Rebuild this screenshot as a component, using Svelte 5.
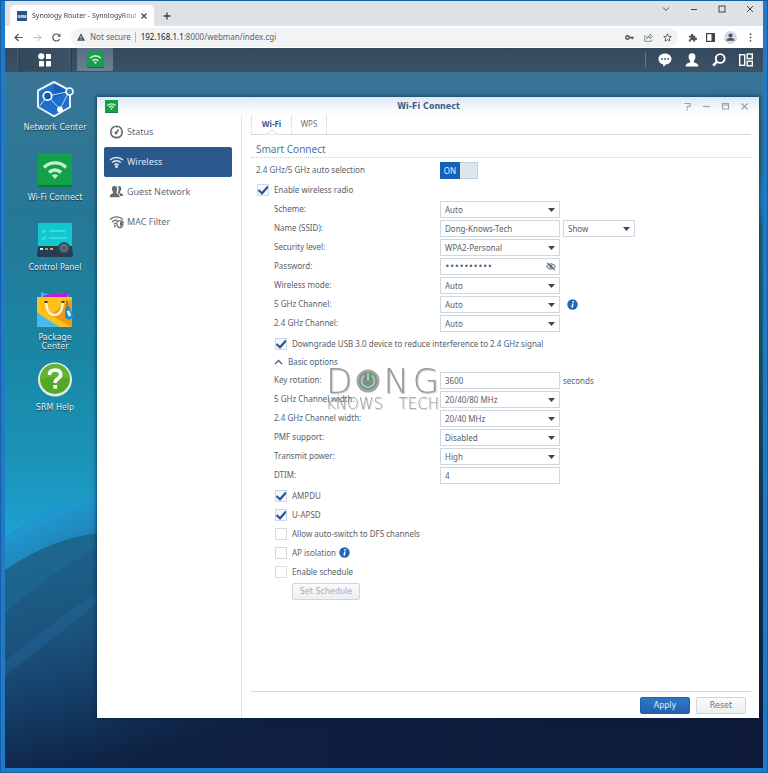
<script>
  const deskIcons = [
    { id: 'network', label: 'Network Center' },
    { id: 'wifi', label: 'Wi-Fi Connect' },
    { id: 'panel', label: 'Control Panel' },
    { id: 'package', label: 'Package\nCenter' },
    { id: 'help', label: 'SRM Help' }
  ];
  const navItems = [
    { id: 'status', label: 'Status' },
    { id: 'wireless', label: 'Wireless' },
    { id: 'guest', label: 'Guest Network' },
    { id: 'mac', label: 'MAC Filter' }
  ];
  const radioFields = [
    { id: 'scheme', label: 'Scheme:', type: 'select', value: 'Auto' },
    { id: 'ssid', label: 'Name (SSID):', type: 'text', value: 'Dong-Knows-Tech', extra: 'Show' },
    { id: 'security', label: 'Security level:', type: 'select', value: 'WPA2-Personal' },
    { id: 'password', label: 'Password:', type: 'password', value: 'password10' },
    { id: 'mode', label: 'Wireless mode:', type: 'select', value: 'Auto' },
    { id: 'ch5', label: '5 GHz Channel:', type: 'select', value: 'Auto', info: true },
    { id: 'ch24', label: '2.4 GHz Channel:', type: 'select', value: 'Auto' }
  ];
  const basicFields = [
    { id: 'key', label: 'Key rotation:', type: 'text', value: '3600', unit: 'seconds' },
    { id: 'w5', label: '5 GHz Channel width:', type: 'select', value: '20/40/80 MHz' },
    { id: 'w24', label: '2.4 GHz Channel width:', type: 'select', value: '20/40 MHz' },
    { id: 'pmf', label: 'PMF support:', type: 'select', value: 'Disabled' },
    { id: 'power', label: 'Transmit power:', type: 'select', value: 'High' },
    { id: 'dtim', label: 'DTIM:', type: 'text', value: '4' }
  ];
  const checks = [
    { label: 'AMPDU', on: true },
    { label: 'U-APSD', on: true },
    { label: 'Allow auto-switch to DFS channels', on: false },
    { label: 'AP isolation', on: false, info: true },
    { label: 'Enable schedule', on: false }
  ];
  let active = $state('wireless');
</script>

{#snippet wifiTile(size)}
  <svg width={size} height={size} viewBox="0 0 34 34" aria-hidden="true">
    <rect width="34" height="34" rx="1" fill="#0a7a38" />
    <rect width="34" height="32" rx="1" fill="#12a048" />
    <g fill="none" stroke="#c9eed2" stroke-width="3.4">
      <path d="M6 14.5a15.5 15.5 0 0 1 22 0" />
      <path d="M11 19.5a8.5 8.5 0 0 1 12 0" />
    </g>
    <path d="M17 26l-3.2-3.4a4.6 4.6 0 0 1 6.4 0z" fill="#c9eed2" />
  </svg>
{/snippet}

{#snippet info()}
  <svg class="info" width="11" height="11" viewBox="0 0 11 11" role="img" aria-label="Info">
    <circle cx="5.5" cy="5.5" r="5.2" fill="#1f68b8" />
    <circle cx="6.1" cy="2.8" r="0.9" fill="#fff" />
    <path d="M5.900 4.500L5.100 8.500" stroke="#fff" stroke-width="1.500" fill="none" />
  </svg>
{/snippet}

{#snippet field(f)}
  <div class="row">
    <label class="name" for={f.id}>{f.label}</label>
    {#if f.type === 'select'}
      <select id={f.id}><option>{f.value}</option></select>
    {:else if f.type === 'password'}
      <span class="secret">
        <input id={f.id} type="password" value={f.value} />
        <button class="eye" aria-label="Show password">
          <svg width="10" height="9" viewBox="0 0 11 9">
            <path d="M.6 4.5Q5.5-1.3 10.400 4.500Q5.500 10.300.6 4.500z" fill="none" stroke="#6a727a" stroke-width="1.200" />
            <circle cx="5.500" cy="4.500" r="1.700" fill="#6a727a" />
            <path d="M1.300.5l8.600 8" stroke="#555d66" stroke-width="1.200" />
          </svg>
        </button>
      </span>
    {:else}
      <input id={f.id} type="text" value={f.value} />
    {/if}
    {#if f.extra}<select class="short" aria-label="SSID visibility"><option>{f.extra}</option></select>{/if}
    {#if f.unit}<span class="unit">{f.unit}</span>{/if}
    {#if f.info}<span class="hint">{@render info()}</span>{/if}
  </div>
{/snippet}

<div class="browser">
  <header class="tabstrip">
    <div class="tab">
      <svg width="10" height="10" viewBox="0 0 10 10" aria-hidden="true"><rect width="10" height="10" fill="#2a5289" /><text x="5" y="6.500" text-anchor="middle" font-size="4" font-weight="700" fill="#fff" font-family="Liberation Sans, sans-serif">SRM</text></svg>
      <span class="tabtitle">Synology Router - SynologyRout</span>
      <button aria-label="Close tab"><svg width="6" height="6" viewBox="0 0 6 6"><path d="M.5.5l5 5M5.500.5l-5 5" stroke="#444" stroke-width="1.200" /></svg></button>
    </div>
    <button class="newtab" aria-label="New tab"><svg width="8" height="8" viewBox="0 0 8 8"><path d="M4 .5v7M.5 4h7" stroke="#3c4043" stroke-width="1.300" /></svg></button>
    <div class="winctl">
      <button aria-label="Search tabs"><svg width="8" height="8" viewBox="0 0 8 8"><path d="M1 2.500l3 3 3-3" stroke="#555" fill="none" /></svg></button>
      <button aria-label="Minimize"><svg width="8" height="8" viewBox="0 0 8 8"><path d="M1 4.500h6" stroke="#444" /></svg></button>
      <button aria-label="Maximize"><svg width="8" height="8" viewBox="0 0 8 8"><rect x="1" y="1" width="6" height="6" stroke="#444" fill="none" /></svg></button>
      <button aria-label="Close"><svg width="8" height="8" viewBox="0 0 8 8"><path d="M1 1l6 6M7 1l-6 6" stroke="#444" /></svg></button>
    </div>
  </header>

  <nav class="toolbar" aria-label="Browser">
    <button aria-label="Back"><svg width="9" height="9" viewBox="0 0 9 9"><path d="M8.500 4.500H1M4.500 1L1 4.500 4.500 8" stroke="#505458" stroke-width="1.200" fill="none" /></svg></button>
    <button aria-label="Forward"><svg width="9" height="9" viewBox="0 0 9 9"><path d="M.5 4.500H8M4.500 1L8 4.500 4.500 8" stroke="#b4b7ba" fill="none" /></svg></button>
    <button aria-label="Reload"><svg width="9" height="9" viewBox="0 0 9 9"><path d="M7.500 6A3.500 3.500 0 1 1 7 2.200" stroke="#505458" stroke-width="1.200" fill="none" /><path d="M8.500.5v3.300H5.200z" fill="#505458" /></svg></button>
    <div class="omnibox">
      <svg width="8" height="8" viewBox="0 0 8 8" aria-hidden="true"><path d="M4 .3L8 7.700H0z" fill="#505458" /><path d="M4 3v2.200M4 5.800v1" stroke="#fff" stroke-width=".8" /></svg>
      <span class="insecure">Not secure</span>
      <span class="url"><b>192.168.1.1</b>:8000/webman/index.cgi</span>
      <span class="boxicons">
        <svg width="9" height="9" viewBox="0 0 9 9" aria-hidden="true"><circle cx="2.500" cy="4.500" r="1.700" stroke="#505458" stroke-width="1.400" fill="none" /><path d="M4.200 4.500h4.500M7.300 4.500v1.800" stroke="#505458" stroke-width="1.500" /></svg>
        <svg width="9" height="9" viewBox="0 0 9 9" aria-hidden="true"><path d="M2.500 3H.7v5.300h6.600V6.500M2.500 6q.5-3 3.500-3V1l2.500 2.500L6 5.600V4Q4 4 2.500 6z" stroke="#74787c" stroke-width=".8" fill="none" /></svg>
        <svg width="9" height="9" viewBox="0 0 9 9" aria-hidden="true"><path d="M4.500.8l1.100 2.500 2.700.3-2 1.800.6 2.700-2.400-1.400-2.400 1.400.6-2.700-2-1.800 2.700-.3z" stroke="#505458" stroke-width=".9" fill="none" /></svg>
      </span>
    </div>
    <div class="ext">
      <svg width="9" height="9" viewBox="0 0 10 10" aria-hidden="true"><path d="M1 3h2.300a1.500 1.500 0 1 1 2.700 0H8v2.200a1.400 1.400 0 1 1 0 2.500V9.500H5.700a1.300 1.300 0 1 0-2.400 0H1V7a1.200 1.200 0 1 0 0-2.200z" fill="#505458" /></svg>
      <svg width="9" height="9" viewBox="0 0 9 9" aria-hidden="true"><rect x=".6" y=".6" width="7.800" height="7.800" fill="none" stroke="#444" stroke-width="1.200" /><path d="M5.500 1h3v7h-3z" fill="#444" /></svg>
      <svg width="13" height="13" viewBox="0 0 13 13" aria-hidden="true"><circle cx="6.500" cy="6.500" r="6.500" fill="#d6dae4" /><circle cx="6.500" cy="4.600" r="2" fill="#474f63" /><path d="M2.500 9.800q0-2.700 4-2.700t4 2.700z" fill="#474f63" /></svg>
      <svg width="9" height="9" viewBox="0 0 9 9" aria-hidden="true"><g fill="#505458"><circle cx="4.500" cy="1.200" r=".9" /><circle cx="4.500" cy="4.500" r=".9" /><circle cx="4.500" cy="7.800" r=".9" /></g></svg>
    </div>
  </nav>

  <div class="taskbar">
    <button class="mainmenu" aria-label="Main menu">
      <svg width="14" height="14" viewBox="0 0 14 14"><g fill="#fff"><circle cx="3.300" cy="3.300" r="3.100" /><rect x="8" y="1" width="5" height="5" rx=".5" /><rect x="1" y="8" width="5" height="5.500" rx=".5" /><rect x="8" y="8" width="5" height="5.500" rx=".5" /></g></svg>
    </button>
    <button class="task" aria-label="Wi-Fi Connect">{@render wifiTile(17)}</button>
    <div class="tray">
      <button aria-label="Notifications"><svg width="14" height="14" viewBox="0 0 14 14"><path d="M7 .5c3.700 0 6.500 2.300 6.500 5.400S10.700 11.200 8 11.400L5.500 13.800 5 11.200C2.400 10.700.5 8.600.5 5.900.5 2.800 3.300.5 7 .5z" fill="#fff" /><g fill="#3a5065"><circle cx="4" cy="6" r=".9" /><circle cx="7" cy="6" r=".9" /><circle cx="10" cy="6" r=".9" /></g></svg></button>
      <button aria-label="User"><svg width="14" height="14" viewBox="0 0 14 14"><path d="M7 .3c2.500 0 3.600 1.600 3.400 4C10.200 6.200 9.500 7 8.800 8v1.300c1.700.8 4.400 1 4.700 4.200H.5C.8 10.300 3.500 10.100 5.200 9.300V8C4.500 7 3.800 6.200 3.600 4.300 3.400 1.900 4.500.3 7 .3z" fill="#fff" /></svg></button>
      <button aria-label="Search"><svg width="14" height="14" viewBox="0 0 14 14"><circle cx="8.200" cy="5.500" r="4.400" fill="none" stroke="#fff" stroke-width="1.900" /><path d="M5 8.700L1.200 12.600" stroke="#fff" stroke-width="2.600" /></svg></button>
      <button aria-label="Widgets"><svg width="14" height="14" viewBox="0 0 14 14"><g fill="none" stroke="#fff" stroke-width="1.400"><rect x=".7" y="1.700" width="5" height="10.600" /><rect x="8.200" y="1" width="5.100" height="4.600" /><rect x="8.200" y="8.200" width="5.100" height="4.600" /></g></svg></button>
    </div>
  </div>

  <main class="desktop">
    <svg class="wallpaper" viewBox="0 0 758 697" preserveAspectRatio="none" aria-hidden="true">
      <defs>
        <linearGradient id="sky" gradientUnits="userSpaceOnUse" x1="0" y1="0" x2="0" y2="470">
          <stop offset="0" stop-color="#3b7596" /><stop offset=".3" stop-color="#257895" /><stop offset=".6" stop-color="#1a86a5" /><stop offset=".85" stop-color="#1b95ba" /><stop offset="1" stop-color="#1ba3d6" />
        </linearGradient>
        <linearGradient id="crest" gradientUnits="userSpaceOnUse" x1="25" y1="440" x2="60" y2="512">
          <stop offset="0" stop-color="#1f9fd6" /><stop offset=".5" stop-color="#2088bd" /><stop offset="1" stop-color="#1c6b96" />
        </linearGradient>
        <linearGradient id="sea" gradientUnits="userSpaceOnUse" x1="20" y1="480" x2="70" y2="697">
          <stop offset="0" stop-color="#1d628c" /><stop offset=".4" stop-color="#1b537c" /><stop offset=".65" stop-color="#15406a" /><stop offset="1" stop-color="#0e2345" />
        </linearGradient>
        <linearGradient id="shade" x1="0" y1="0" x2="1" y2="0">
          <stop offset=".12" stop-color="#10183a" stop-opacity="0" /><stop offset=".4" stop-color="#101c3d" stop-opacity=".6" /><stop offset="1" stop-color="#0e1732" stop-opacity=".7" />
        </linearGradient>
        <linearGradient id="east" x1="0" y1="0" x2="0" y2="1">
          <stop offset="0" stop-color="#3b7596" /><stop offset=".14" stop-color="#286d92" /><stop offset=".2" stop-color="#1b84c2" /><stop offset=".24" stop-color="#1d6a90" /><stop offset=".4" stop-color="#176374" /><stop offset=".6" stop-color="#15465b" /><stop offset=".8" stop-color="#12304d" /><stop offset="1" stop-color="#0f1e3a" />
        </linearGradient>
      </defs>
      <rect width="758" height="697" fill="url(#sky)" />
      <path d="M0 466Q45 436 92 420Q300 350 758 300V697H0z" fill="url(#sea)" />
      <path d="M0 466Q45 436 92 420V462Q45 468 0 499z" fill="url(#crest)" />
      <path d="M0 499Q45 468 92 462V476Q40 505 0 542z" fill="#1d6a93" opacity=".6" />
      <path d="M0 590Q50 550 92 520V532Q50 566 0 604z" fill="#2468a0" opacity=".4" />
      <path d="M0 621H758V697H0z" fill="url(#shade)" />
      <rect x="700" width="58" height="647" fill="url(#east)" />
    </svg>

    <div class="icons">
      {#each deskIcons as icon}
        <button class="deskicon">
          {#if icon.id === 'wifi'}
            <span class="tile">{@render wifiTile(34)}</span>
          {:else}
            <svg width="38" height="36" viewBox="0 0 38 36" aria-hidden="true">
              {#if icon.id === 'network'}
                <path d="M18 1L34 9.500V26L18 35.300 2 26V9.500z" fill="#1d6fc9" stroke="#e6eff6" stroke-width="2" stroke-linejoin="round" />
                <path d="M18 2.500L32.500 10 18 17z" fill="#1456ab" opacity=".6" />
                <path d="M11.500 15L33 10.500M11.500 15L24 28M11.500 15L3.500 25M33 10.500L24 28" stroke="#b7dcf5" stroke-width="1" />
                <circle cx="11.500" cy="15" r="4.200" fill="#1459ac" stroke="#fff" stroke-width="1.700" />
                <circle cx="33.500" cy="10.500" r="3.500" fill="#2a86cc" stroke="#fff" stroke-width="1.700" />
                <circle cx="24" cy="28.500" r="2.900" fill="#fff" />
              {:else if icon.id === 'panel'}
                <rect x="2" y="2" width="34" height="24" fill="#12c8cf" />
                <g stroke="#50dede" stroke-width="1.500" fill="none"><path d="M6 10l1.500 1.500L10 8.500M13 10h16M6 17l1.500 1.500 2.500-3M13 17h18" /></g>
                <path d="M2 25h34l1 9q0 2-2 2H3q-2 0-2-2z" fill="#263c52" />
                <path d="M4 28h3" stroke="#e6eef2" stroke-width="2" /><path d="M9 28h3" stroke="#61c36d" stroke-width="2" /><path d="M14 28h3" stroke="#e6a94c" stroke-width="2" />
                <circle cx="28" cy="27" r="6" fill="#31475c" /><circle cx="28" cy="27" r="4" fill="#61717f" /><circle cx="28" cy="27" r="2" fill="#48596a" />
              {:else if icon.id === 'package'}
                <path d="M5 1l10 3 9-2 9 1v6H5z" fill="#35b9e8" /><path d="M9 4l24-2.500-2 6H5z" fill="#c31bd2" />
                <path d="M1 6h35v30H1z" fill="#fbc21c" /><path d="M36 36V8L14 24z" fill="#f19a17" /><path d="M1 21q9 7 23 15H1z" fill="#4db8ea" />
                <path d="M10 11q1 13 8.500 13T27 11" fill="none" stroke="#fff0ce" stroke-width="2.400" /><path d="M8.500 11h3M25.500 11h3" stroke="#4a3a22" stroke-width="2" />
                <path d="M31 9v8" stroke="#7d5a20" stroke-width="1.200" /><path d="M29 17l4-2 5 11-5 3-4-2z" fill="#1695d4" /><path d="M32 20l2 5" stroke="#fff" stroke-width="2.500" />
              {:else}
                <circle cx="19" cy="18.500" r="17" fill="#e7ece5" /><circle cx="19" cy="18" r="15" fill="#52a928" /><path d="M4 18a15 15 0 0 1 30 0q-15-4-30 0z" fill="#62b336" />
                <path d="M13.500 14q0-5 5.500-5 5.700 0 5.700 4.600 0 2.500-3 4.300-2.500 1.400-2.500 4" fill="none" stroke="#fff" stroke-width="3.600" /><rect x="17.300" y="24" width="3.800" height="3.600" fill="#fff" />
              {/if}
            </svg>
          {/if}
          <span class="caption">{icon.label}</span>
        </button>
      {/each}
    </div>

    <section class="window">
      <header class="titlebar">
        {@render wifiTile(13)}
        <h1>Wi-Fi Connect</h1>
        <div class="controls">
          <button aria-label="Help"><svg width="9" height="9" viewBox="0 0 9 9"><path d="M1.500 1.500h5.500v3H4.300v1.700M4.300 7v1.400" /></svg></button>
          <button aria-label="Minimize"><svg width="9" height="9" viewBox="0 0 9 9"><path d="M1 4.500h7" /></svg></button>
          <button aria-label="Maximize"><svg width="9" height="9" viewBox="0 0 9 9"><path d="M1.500 1.500h6v5.500h-6zM1.500 3h6" /></svg></button>
          <button aria-label="Close"><svg width="9" height="9" viewBox="0 0 9 9"><path d="M1.500 1.500l6 6M7.500 1.500l-6 6" /></svg></button>
        </div>
      </header>

      <div class="body">
        <nav class="sidebar" aria-label="Sections">
          {#each navItems as item}
            <button class:active={active === item.id} onclick={() => (active = item.id)}>
              <svg width="15" height="14" viewBox="0 0 15 14" aria-hidden="true" fill="none" stroke="currentColor" stroke-width="1.500">
                {#if item.id === 'status'}
                  <circle cx="7.500" cy="7" r="5.800" /><path d="M7 8.500l2.500-4" /><path d="M7.500 1v2M7.500 11v2M2 7h1.500M11.500 7h2" stroke-width=".7" /><circle cx="7" cy="8" r=".7" />
                {:else if item.id === 'wireless'}
                  <path d="M1 5a9.500 9.500 0 0 1 13 0M3.200 7.500a6.500 6.500 0 0 1 8.600 0M5.300 9.800a3.500 3.500 0 0 1 4.400 0" /><circle cx="7.500" cy="11.600" r="1.500" fill="currentColor" stroke="none" />
                {:else if item.id === 'guest'}
                  <g fill="currentColor" stroke="none"><path d="M5.500 1c2.300 0 3 1.500 2.700 3.500L7.500 7v1.300c1.500.7 3 1 3.200 3.900H.8C1 9.300 2.300 9 4 8.300V7L2.900 4.500C2.600 2.500 3.200 1 5.500 1z" /><path d="M9 1c2.800-.5 3.600 1 3.200 3.400L11 7v1c2 .6 3 1.300 3.200 3h-3Q10.800 8.500 8.700 7.700l1-3Q9.900 2.400 9 1z" /></g>
                {:else}
                  <path d="M1 4.500a9.500 9.500 0 0 1 13 0M3 7a6.500 6.500 0 0 1 5.500-1.700M5 9.300a3 3 0 0 1 2-1" stroke-width="1.300" /><path d="M8 6.500l3-1 3 1v2.800q0 2.400-3 3.700-3-1.300-3-3.700z" stroke-width="1.100" /><path d="M11 6.500l2.500.6v2.300L11 12z" fill="currentColor" stroke="none" /><circle cx="6" cy="11.300" r="1" fill="currentColor" stroke="none" />
                {/if}
              </svg>
              {item.label}
            </button>
          {/each}
        </nav>

        <div class="content">
          <div class="tabs" role="tablist">
            <button role="tab" aria-selected="true" class="current">Wi-Fi<svg width="10" height="6" viewBox="0 0 10 6" aria-hidden="true"><path d="M0 5.500L5 .7l5 4.800z" fill="#fff" /><path d="M0 4.500h1L5 .7l4 3.800h1" fill="none" stroke="#cfd5da" /></svg></button>
            <button role="tab" aria-selected="false">WPS</button>
          </div>

          <form onsubmit={(e) => e.preventDefault()}>
            <h2>Smart Connect</h2>
            <div class="row first">
              <span class="name" id="smart">2.4 GHz/5 GHz auto selection</span>
              <button type="button" class="switch" role="switch" aria-checked="true" aria-labelledby="smart"><span>ON</span></button>
            </div>
            <label class="check"><input type="checkbox" checked />Enable wireless radio</label>

            <div class="radio">
              <div class="group">
                {#each radioFields as f}{@render field(f)}{/each}
              </div>
              <label class="check"><input type="checkbox" checked />Downgrade USB 3.0 device to reduce interference to 2.4 GHz signal</label>
              <button type="button" class="fold">
                <svg width="9" height="6" viewBox="0 0 9 6" aria-hidden="true"><path d="M1 5l3.500-3.500L8 5" fill="none" stroke="#3a6491" stroke-width="1.300" /></svg>Basic options
              </button>
              <div class="group basic">
                {#each basicFields as f}{@render field(f)}{/each}
                <div class="watermark">
                  <div class="dong">
                    <span>D</span>
                    <svg width="24" height="24" viewBox="0 0 24 24" aria-label="O" role="img"><circle cx="12" cy="12" r="10.300" fill="#666e6c" stroke="#8b9290" stroke-width="2.400" /><path d="M8.300 6.500a6.500 6.500 0 1 0 7.400 0M12 4v7.500" fill="none" stroke="#6fdc8c" stroke-width="1.800" /></svg>
                    <span>N</span><span>G</span>
                  </div>
                  <div class="knows"><span>KNOWS</span><span>TECH</span></div>
                </div>
              </div>
              {#each checks as c}
                <label class="check"><input type="checkbox" checked={c.on} />{c.label}{#if c.info}{@render info()}{/if}</label>
              {/each}
              <button type="button" class="btn schedule" disabled>Set Schedule</button>
            </div>
          </form>

          <footer>
            <button class="btn primary">Apply</button>
            <button class="btn">Reset</button>
          </footer>
        </div>
      </div>
    </section>
  </main>
</div>

<style>
  :global(body) {
    margin: 0;
  }
  * {
    box-sizing: border-box;
  }
  button,
  input,
  select {
    font: inherit;
    color: inherit;
    margin: 0;
    padding: 0;
    border: 0;
    background: none;
  }
  svg {
    display: block;
    flex: none;
  }
  .browser {
    display: flex;
    flex-direction: column;
    min-height: 100vh;
    border: 5px solid #1f7bc9;
    border-top: 1px solid #7fa5cf;
    outline: 1px solid #165fa3;
    outline-offset: -1px;
    font: 8px/10px 'DejaVu Sans', Verdana, sans-serif;
    color: #58616a;
  }

  .tabstrip {
    display: flex;
    align-items: center;
    height: 25px;
    padding: 4px 5px 0;
    background: #dee1e6;
    font: 7px/10px 'Noto Sans', sans-serif;
  }
  .tab {
    display: flex;
    align-items: center;
    gap: 5px;
    width: 144px;
    height: 21px;
    padding: 0 7px;
    border-radius: 5px 5px 0 0;
    background: #fff;
    color: #3a3e42;
  }
  .tabtitle {
    flex: 1;
    min-width: 0;
    white-space: nowrap;
    mask-image: linear-gradient(90deg, #000 85%, transparent 115%);
  }
  .newtab {
    margin-left: 9px;
  }
  .winctl {
    display: flex;
    gap: 20px;
    align-self: flex-start;
    margin: 0 4px 0 auto;
  }
  .toolbar {
    display: flex;
    align-items: center;
    gap: 10px;
    height: 22px;
    padding: 0 8px 0 9px;
    background: #fff;
  }
  .omnibox {
    display: flex;
    flex: 1;
    align-items: center;
    gap: 5px;
    height: 19px;
    padding: 0 6px;
    border-radius: 10px;
    background: #f1f3f4;
    font: 8px/10px 'Noto Sans', sans-serif;
    color: #5f6368;
  }
  .insecure {
    padding-right: 4px;
    border-right: 1px solid #b5b8bb;
  }
  .url b {
    font-weight: 400;
    color: #202124;
  }
  .boxicons {
    display: flex;
    gap: 10px;
    margin-left: auto;
  }
  .ext {
    display: flex;
    align-items: center;
    gap: 9px;
  }

  .taskbar {
    display: flex;
    height: 23px;
    flex: none;
    padding-left: 12px;
    background: linear-gradient(#34495b, #3d5164);
  }
  .taskbar button {
    display: grid;
    place-items: center;
  }
  .mainmenu {
    width: 55px;
    border-right: 1px solid #26394a;
    border-left: 1px solid #4a5e70;
    background: linear-gradient(90deg, #33475a, #3f5366);
  }
  .taskbar .task {
    width: 36px;
    margin-left: 5px;
    background: linear-gradient(#587082, #6c8191);
  }
  .tray {
    display: flex;
    gap: 13px;
    margin: 0 10px 0 auto;
  }
  .tray::before {
    content: '';
    align-self: center;
    height: 15px;
    margin-right: -1px;
    border-left: 1px solid #66798a;
  }

  .desktop {
    position: relative;
    display: flex;
    flex: 1;
    padding: 25px 4px 50px 0;
    border-top: 1px solid #2c5570;
    background: #12345c;
  }
  .wallpaper {
    position: absolute;
    inset: 0;
    width: 100%;
    height: 100%;
  }
  .icons {
    position: relative;
    flex: none;
    width: 92px;
    margin-top: -16px;
    padding-left: 8px;
  }
  .deskicon {
    display: flex;
    flex-direction: column;
    align-items: center;
    gap: 6px;
    width: 84px;
    height: 70px;
    color: #e9f1f5;
    text-shadow: 0 1px 1px #0a3349;
    cursor: pointer;
  }
  .caption {
    line-height: 9px;
    white-space: pre-line;
  }
  .tile {
    padding: 2px 0 0;
  }
  .window {
    position: relative;
    display: flex;
    flex-direction: column;
    flex: 1;
    background: #fff;
    box-shadow: 0 0 4px 1px rgba(5, 30, 55, 0.6);
  }
  .titlebar {
    display: flex;
    align-items: center;
    height: 19px;
    padding: 0 10px 0 8px;
    background: linear-gradient(#dbe7f5, #f6f9fc 60%, #fff);
  }
  h1 {
    flex: 1;
    margin: 0;
    padding-left: 56px;
    font-size: 8px;
    line-height: 10px;
    text-align: center;
    color: #3f5d84;
  }
  .controls {
    display: flex;
    gap: 10px;
  }
  .controls svg {
    fill: none;
    stroke: #99a2ab;
    stroke-width: 1.2;
  }
  .body {
    display: flex;
    flex: 1;
    font-family: 'Noto Sans', sans-serif;
  }
  .sidebar {
    flex: none;
    width: 145px;
    padding: 1px 9px 0 7px;
    border-right: 1px solid #dfe2e5;
  }
  .sidebar button {
    display: flex;
    align-items: center;
    gap: 3px;
    width: 100%;
    height: 30px;
    padding-left: 5px;
    border-radius: 2px;
    font-size: 9px;
    color: #626a72;
  }
  .sidebar .active {
    background: #2a578c;
    color: #dfe9f5;
  }
  .content {
    display: flex;
    flex: 1;
    flex-direction: column;
    min-width: 0;
    padding: 0 8px 0 9px;
  }
  .tabs {
    display: flex;
    height: 19px;
    border-bottom: 1px solid #d5dadf;
  }
  .tabs button {
    position: relative;
    min-width: 35px;
    padding-bottom: 2px;
    border-right: 1px dotted #c9d0d6;
    color: #6a727a;
  }
  .tabs .current {
    width: 41px;
    border-left: 1px dotted #c9d0d6;
    font-weight: 700;
    color: #33598a;
  }
  .tabs svg {
    position: absolute;
    left: 15px;
    bottom: -1px;
  }
  form {
    padding-left: 5px;
  }
  h2 {
    margin: 6px 0 3px -5px;
    padding: 2px 0 2px 5px;
    border-bottom: 1px dotted #c5ccd3;
    font-size: 10px;
    line-height: 12px;
    font-weight: 400;
    color: #4a74a4;
  }
  .row {
    display: flex;
    align-items: center;
    height: 19px;
  }
  .name {
    width: 166px;
    padding-bottom: 2px;
    white-space: nowrap;
  }
  .first .name {
    width: 184px;
  }
  .switch {
    width: 38px;
    height: 17px;
    border: 1px solid #c3ced8;
    background: #dbe6ef;
    text-align: center;
    color: #e9f3ff;
  }
  .switch span {
    display: block;
    width: 20px;
    margin: -1px;
    line-height: 17px;
    background: #1760b8;
  }
  .check {
    display: flex;
    align-items: center;
    height: 19px;
    padding-left: 1px;
  }
  .check input {
    appearance: none;
    width: 12px;
    height: 12px;
    margin-right: 5px;
    border: 1px solid #d3dbe2;
    background-color: #fff;
  }
  .check input:checked {
    border-color: #cbdaea;
    background: #f5f9fd url("data:image/svg+xml,%3Csvg xmlns='http://www.w3.org/2000/svg' viewBox='0 0 12 12'%3E%3Cpath d='M1.500 6L5 9.300 11 2.500' fill='none' stroke='%232a5890' stroke-width='2.200'/%3E%3C/svg%3E") center / 12px no-repeat;
  }
  .check .info {
    margin-left: 3px;
  }
  .radio {
    padding: 1px 0 0 18px;
  }
  .group {
    position: relative;
    margin-bottom: 1px;
  }
  .row > select,
  .row > input,
  .secret {
    width: 120px;
    height: 17px;
    border: 1px solid #cdd8e2;
    background: #fff;
    line-height: 15px;
  }
  .row > select,
  .row > input,
  .secret input {
    padding: 0 4px;
  }
  select {
    appearance: none;
  }
  .row > select {
    background: #fff url("data:image/svg+xml,%3Csvg xmlns='http://www.w3.org/2000/svg' viewBox='0 0 7 4'%3E%3Cpath d='M0 0h7L3.500 4z' fill='%23444'/%3E%3C/svg%3E") right 4px center / 7px 4px no-repeat;
  }
  .row > .short {
    width: 72px;
    margin-left: 3px;
  }
  .secret {
    display: flex;
    align-items: center;
    padding-right: 3px;
  }
  .secret input {
    flex: 1;
    min-width: 0;
    height: 15px;
    font-family: 'DejaVu Sans', sans-serif;
  }
  .unit {
    margin-left: 3px;
  }
  .hint {
    margin-left: 7px;
  }
  .fold {
    display: flex;
    align-items: center;
    gap: 5px;
    height: 18px;
    color: #3a6491;
  }
  .watermark {
    position: absolute;
    top: -4px;
    left: 52px;
    width: 113px;
    font-family: 'DejaVu Sans', sans-serif;
    font-weight: 200;
    color: #7d8282;
    text-shadow: 1px 1px 1px #b7baba;
    opacity: 0.8;
    pointer-events: none;
  }
  .dong,
  .knows {
    display: flex;
    justify-content: space-between;
    align-items: center;
  }
  .dong {
    font-size: 34px;
    line-height: 28px;
  }
  .knows {
    font-size: 15px;
    line-height: 18px;
  }
  .btn {
    min-width: 50px;
    height: 17px;
    border: 1px solid #cdd6df;
    border-radius: 2px;
    background: linear-gradient(#f9fbfd, #eceff3);
    color: #6a727a;
    font-family: 'DejaVu Sans', sans-serif;
  }
  .schedule {
    display: block;
    width: 68px;
    margin: 2px 0 2px 18px;
    color: #a4abb3;
  }
  .primary {
    border-color: #2261a8;
    background: linear-gradient(#3078c4, #2263ad);
    color: #e6f1ff;
  }
  footer {
    display: flex;
    justify-content: flex-end;
    gap: 6px;
    margin-top: auto;
    padding: 5px 5px 4px;
    border-top: 1px solid #d5d9dd;
  }
</style>
